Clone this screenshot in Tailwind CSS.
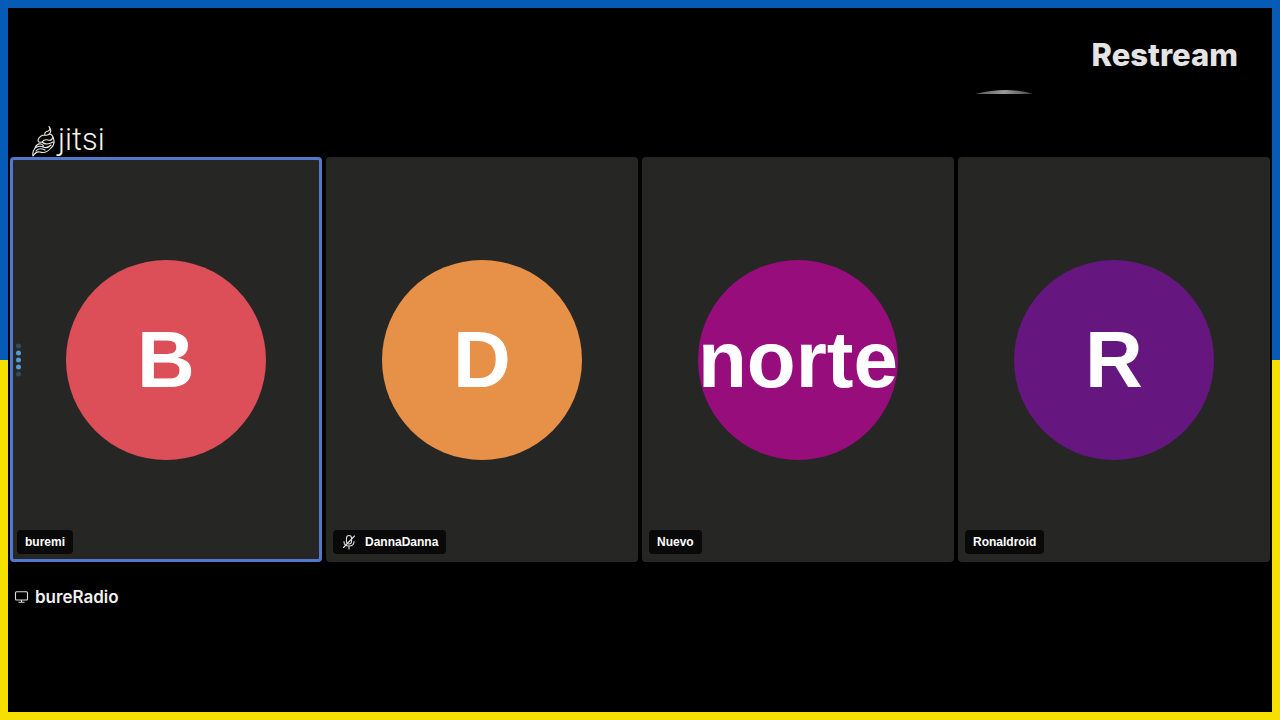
<!DOCTYPE html>
<html lang="en">
<head>
<meta charset="utf-8">
<meta name="viewport" content="width=device-width, initial-scale=1">
<title>bureRadio</title>
<script src="https://cdn.jsdelivr.net/npm/@tailwindcss/browser@4"></script>
</head>
<body class="flex min-h-screen bg-[linear-gradient(to_bottom,#065bb6_50%,#f6e000_50%)] p-2 font-['Liberation_Sans',sans-serif] text-white">
<div class="flex flex-1 flex-col bg-black px-0.5">
  <header class="px-5 pt-[29px]">
    <div class="flex justify-end pr-3 font-['Inter',sans-serif] text-[31px] leading-9 font-extrabold text-[#e4e4e4]">Restream</div>
    <div class="flex justify-end pt-[15px] pr-[215px]">
      <svg class="h-2 w-[60px]" viewBox="0 0 60 8" aria-hidden="true">
        <defs><linearGradient id="arc" x1="0" x2="1"><stop offset="0" stop-color="#555"/><stop offset=".5" stop-color="#999"/><stop offset="1" stop-color="#444"/></linearGradient></defs>
        <path d="M0 6Q33-2 58 6Z" fill="url(#arc)"/>
      </svg>
    </div>
    <div class="flex h-[61px] items-end gap-px">
      <svg class="ml-0.5 h-8 w-[25px] shrink-0" viewBox="0 0 25 32" fill="none" stroke="#eeeee2" stroke-width="1.1" stroke-linecap="round" stroke-linejoin="round" aria-hidden="true">
        <path d="M17 1.5Q19 5 16 6Q12 7 13 10Q16 11 18 8Q20 5 17 1.5M13 10Q8 10 6 15Q6 18 10 17Q12 14 16 15Q20 16 21 12Q20 9 17 9M10 17Q14 21 21 17M21 12Q24 19 19 23Q14 29 8 27Q4 26 1 31Q0 27 3 23Q5 18 9 19Q12 20 11 22M3 23Q7 20 11 22Q15 24 19 20M4 26Q7 22 13 25"/>
      </svg>
      <h1 class="pb-px font-['Roboto',sans-serif] text-[31px] leading-8 font-light text-[#f4f4ea]">jitsi</h1>
    </div>
  </header>
  <main class="grid h-[405px] grid-cols-4 gap-1">
    <section class="relative flex items-center justify-center rounded bg-[#262624] ring-3 ring-[#5278cb] ring-inset">
      <div class="flex size-[200px] items-center justify-center rounded-full bg-[#dc4f59] text-[80px] font-bold">B</div>
      <button class="absolute top-1/2 left-1.5 flex -translate-y-1/2 flex-col gap-0.5" aria-label="More options">
        <span class="size-[5px] rounded-full bg-[#334b5d]"></span><span class="size-[5px] rounded-full bg-[#549bd3]"></span><span class="size-[5px] rounded-full bg-[#549bd3]"></span><span class="size-[5px] rounded-full bg-[#549bd3]"></span><span class="size-[5px] rounded-full bg-[#334b5d]"></span>
      </button>
      <div class="absolute bottom-2 left-[7px] flex h-6 items-center rounded bg-[#090909] px-2 text-xs font-bold">buremi</div>
    </section>
    <section class="relative flex items-center justify-center rounded bg-[#262624]">
      <div class="flex size-[200px] items-center justify-center rounded-full bg-[#e79048] text-[80px] font-bold">D</div>
      <div class="absolute bottom-2 left-[7px] flex h-6 items-center gap-2 rounded bg-[#090909] px-2 text-xs font-bold">
        <svg class="size-4" viewBox="0 0 16 16" fill="none" stroke="#ddd" stroke-width="1.1" stroke-linecap="round" role="img" aria-label="Muted"><rect x="5.5" y="1.5" width="5" height="8.5" rx="2.5"/><path d="M3 7.5Q3 12 8 12Q13 12 13 7.5M8 12V15M2.5 13.5L13.5 2"/></svg>
        DannaDanna
      </div>
    </section>
    <section class="relative flex items-center justify-center rounded bg-[#262624]">
      <div class="flex size-[200px] items-center justify-center rounded-full bg-[#980d7c] text-[80px] font-bold">norte</div>
      <div class="absolute bottom-2 left-[7px] flex h-6 items-center rounded bg-[#090909] px-2 text-xs font-bold">Nuevo</div>
    </section>
    <section class="relative flex items-center justify-center rounded bg-[#262624]">
      <div class="flex size-[200px] items-center justify-center rounded-full bg-[#65177f] text-[80px] font-bold">R</div>
      <div class="absolute bottom-2 left-[7px] flex h-6 items-center rounded bg-[#090909] px-2 text-xs font-bold">Ronaldroid</div>
    </section>
  </main>
  <footer class="flex items-center gap-1.5 px-1 pt-[23px] font-['Inter',sans-serif] text-[17px] leading-6 font-semibold text-[#f1f1f1]">
    <svg class="h-3 w-[15px]" viewBox="0 0 15 12" fill="none" stroke="#ddd" stroke-width="1.1" aria-hidden="true"><rect x="1.5" y=".8" width="12" height="8.2" rx="1"/><path d="M7.5 9v2M4.5 11.2h6"/></svg>
    <span>bureRadio</span>
  </footer>
</div>
</body>
</html>
